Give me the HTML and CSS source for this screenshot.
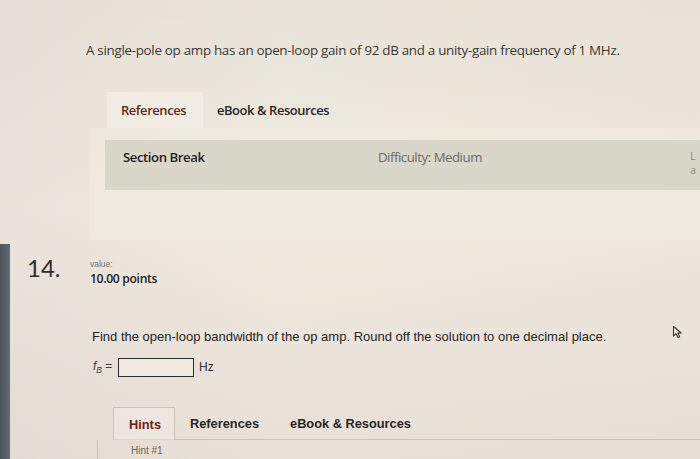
FILE: index.html
```html
<!DOCTYPE html>
<html lang="en">
<head>
  <meta charset="UTF-8">
  <meta name="viewport" content="width=device-width, initial-scale=1.0">
  <title>Question 14</title>
  <link rel="stylesheet" href="styles.css">
</head>
<body>
<div class="page">
  <div class="intro">
    <p class="prompt">A single-pole op amp has an open-loop gain of 92 dB and a unity-gain frequency of 1 MHz.</p>

    <div class="tabs tabs-top">
      <div class="tab active">References</div>
      <div class="tab">eBook &amp; Resources</div>
    </div>

    <div class="panel">
      <div class="section-bar">
        <span class="section-title">Section Break</span>
        <span class="difficulty">Difficulty: Medium</span>
        <span class="cut">L<br>a</span>
      </div>
    </div>
  </div>

  <div class="question">
    <div class="qhead">
      <div class="qnum">14.</div>
      <div class="qvalue">
        <div class="value-label">value:</div>
        <div class="points">10.00 points</div>
      </div>
    </div>

    <p class="ask">Find the open-loop bandwidth of the op amp. Round off the solution to one decimal place.</p>

    <div class="answer">
      <span class="var"><i>f</i><sub>B</sub> =</span>
      <span class="answer-box"></span>
      <span class="unit">Hz</span>
    </div>

    <div class="tabs tabs-bottom">
      <div class="tab active">Hints</div>
      <div class="tab">References</div>
      <div class="tab">eBook &amp; Resources</div>
    </div>
    <div class="hint-panel">
      <div class="hint-line">Hint #1</div>
    </div>
  </div>
</div>

<!-- mouse pointer caught in the photo -->
<svg class="pointer" width="12" height="14" viewBox="0 0 12 14">
  <path d="M1.5 1.5 L1.5 11 L4 8.6 L6 12.5 L7.6 11.7 L5.8 8 L9.2 8 Z" fill="#f1ece4" stroke="#3a3a3a" stroke-width="1.1" stroke-linejoin="round"/>
</svg>
</body>
</html>
```

FILE: styles.css
```css
* {
  margin: 0;
  padding: 0;
  box-sizing: border-box;
}

html, body {
  height: 100%;
}

body {
  font-family: "Liberation Sans", Arial, sans-serif;
  color: #2b2a28;
  background-color: #e8e3d8;
  background-image:
          linear-gradient(to bottom, rgba(255, 255, 255, 0.0) 0%, rgba(255, 250, 240, 0.25) 45%, rgba(230, 210, 205, 0.25) 100%),
          linear-gradient(to right, rgba(225, 215, 210, 0.5) 0%, rgba(240, 236, 226, 0.2) 40%, rgba(232, 222, 214, 0.4) 100%);
  overflow: hidden;
  position: relative;
}

/* monitor bezel at the left edge of the photo */
body::before {
  content: "";
  position: absolute;
  top: 244px;
  left: 0;
  width: 10px;
  bottom: 0;
  background: linear-gradient(to right, #4b535b, #636a70);
}

.page {
  padding-top: 42px;
}

/* Intro / shared stem */
.prompt {
  font-family: "Open Sans", "Liberation Sans", sans-serif;
  font-size: 13.4px;
  line-height: 16px;
  letter-spacing: -0.3px;
  color: #3a3835;
  padding-left: 86px;
}

.tabs {
  display: flex;
}

.tab {
  font-weight: bold;
  color: #262524;
}

.tabs-top {
  margin-top: 34px;
  padding-left: 107px;
  height: 36px;
  align-items: center;
}

.tabs-top .tab {
  font-family: "Open Sans", "Liberation Sans", sans-serif;
  font-weight: 600;
  font-size: 12.9px;
  letter-spacing: -0.4px;
  padding: 0 16px 0 14px;
  height: 36px;
  line-height: 36px;
}

.tabs-top .tab.active {
  background: rgba(246, 242, 234, 0.6);
  color: #5a2a20;
  width: 96px;
}

.panel {
  margin-left: 90px;
  height: 112px;
  padding: 12px 0 0 15px;
  background: rgba(244, 240, 230, 0.35);
}

.section-bar {
  display: flex;
  height: 50px;
  padding: 9px 0 0 18px;
  background: #d9d6ca;
  font-family: "Open Sans", "Liberation Sans", sans-serif;
  font-size: 13.2px;
  letter-spacing: -0.45px;
  line-height: 16px;
}

.section-title {
  font-weight: 600;
  color: #1f1f1e;
  width: 255px;
}

.difficulty {
  color: #6d6b66;
  width: 312px;
}

.cut {
  color: #8a8882;
  font-size: 11px;
  line-height: 14px;
}

/* Question */
.question {
  padding-top: 16px;
}

.qhead {
  display: flex;
  align-items: flex-start;
  padding-left: 27px;
}

.qnum {
  font-family: "Lato", "Liberation Sans", sans-serif;
  font-size: 24px;
  line-height: 24px;
  color: #2e2e2e;
  width: 63px;
}

.qvalue {
  padding-top: 3px;
}

.value-label {
  font-size: 8.5px;
  line-height: 11px;
  color: #777570;
}

.points {
  font-family: "Open Sans", "Liberation Sans", sans-serif;
  font-size: 12.2px;
  font-weight: 600;
  letter-spacing: -0.35px;
  line-height: 14px;
  margin-top: 2px;
  color: #1e1e1d;
}

.ask {
  font-size: 13px;
  line-height: 16px;
  color: #262625;
  padding-left: 92px;
  margin-top: 43px;
}

.answer {
  display: flex;
  align-items: center;
  padding-left: 93px;
  margin-top: 12px;
  height: 20px;
}

.var {
  font-size: 12px;
  color: #3b3a38;
  width: 25px;
}

.var sub {
  font-size: 8.5px;
  font-style: italic;
}

.answer-box {
  width: 76px;
  height: 19px;
  border: 1px solid #2c2c2c;
  background: rgba(250, 246, 238, 0.4);
}

.unit {
  font-size: 12px;
  color: #333230;
  margin-left: 5px;
}

.tabs-bottom {
  margin-top: 30px;
  margin-left: 113px;
  height: 33px;
  align-items: center;
  border-bottom: 1px solid rgba(180, 172, 160, 0.6);
}

.tabs-bottom .tab {
  font-size: 12.8px;
  height: 33px;
  line-height: 33px;
  padding-right: 31px;
}

.tabs-bottom .tab.active {
  color: #701d18;
  width: 62px;
  padding-left: 15px;
  padding-right: 0;
  margin-right: 15px;
  border: 1px solid rgba(190, 180, 168, 0.7);
  border-bottom: none;
  background: rgba(242, 238, 230, 0.5);
}

.hint-panel {
  margin-left: 97px;
  height: 40px;
  border-left: 1px solid rgba(190, 180, 168, 0.6);
  padding: 5px 0 0 33px;
}

.hint-line {
  font-size: 10px;
  line-height: 12px;
  color: #6a665f;
}

.pointer {
  position: absolute;
  left: 672px;
  top: 325px;
}
```
